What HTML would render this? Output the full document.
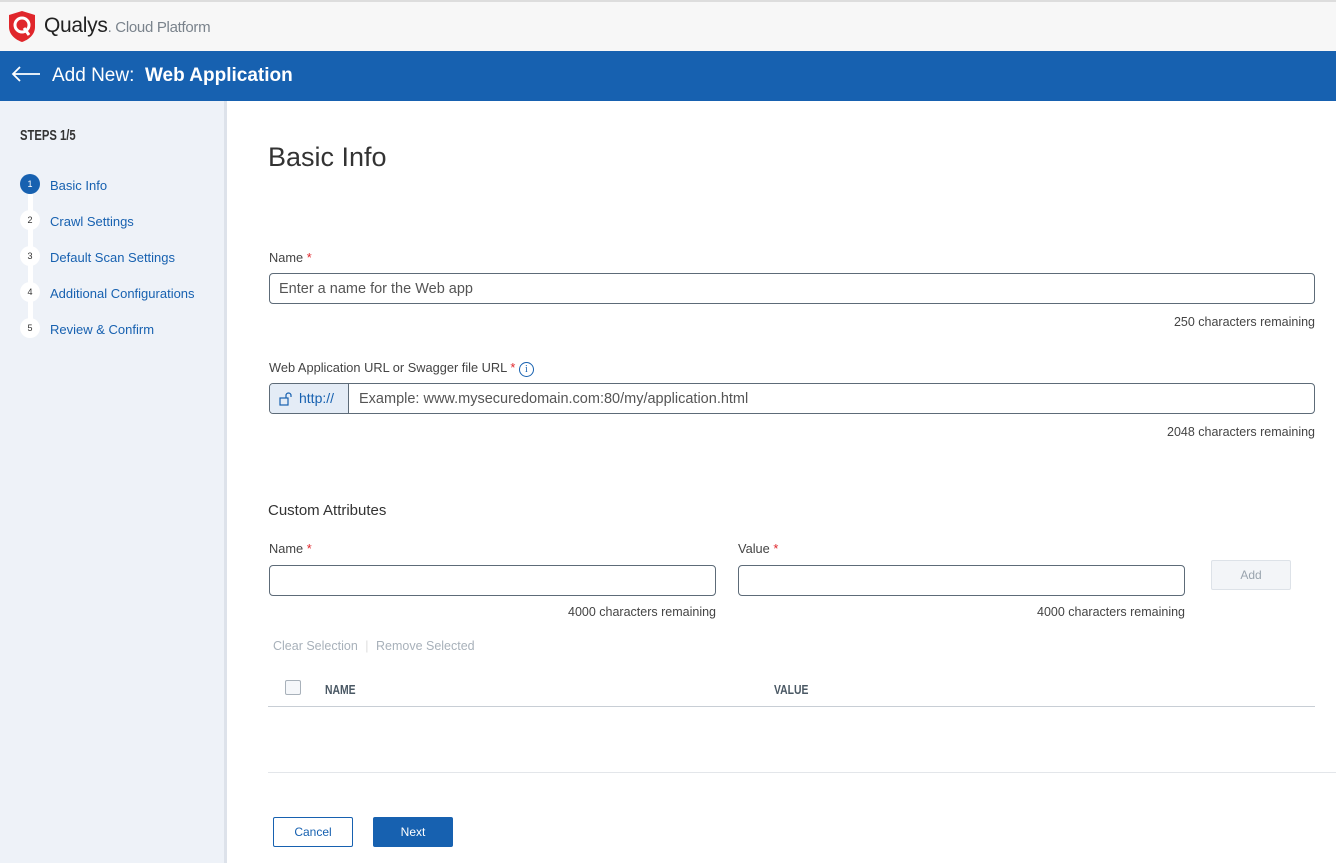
<!DOCTYPE html>
<html><head><meta charset="utf-8"><style>
*{box-sizing:border-box;margin:0;padding:0}
body{width:1336px;height:863px;overflow:hidden;font-family:"Liberation Sans",sans-serif;background:#fff;position:relative;color:#333}
.abs{position:absolute}
.top{left:0;top:0;width:1336px;height:51px;background:#f7f7f7;border-top:2px solid #ddd}
.bar{left:0;top:51px;width:1336px;height:50px;background:#1761b0;color:#fff}
.side{left:0;top:101px;width:227px;height:762px;background:#eef2f8;border-right:3px solid #dde2ea}
.lbl{font-size:12.8px;color:#444}
.req{color:#e0262b}
.inp{border:1px solid #5d6b78;border-radius:4px;height:31px;font-size:14.5px;color:#555;padding:7px 9px}
.rem{font-size:12.5px;color:#444;text-align:right}
.step{position:absolute;left:20px;font-size:13px;color:#1761b0}
.num{position:absolute;left:0;width:20px;height:20px;border-radius:50%;background:#fff;color:#333;font-size:9px;text-align:center;line-height:20px}
</style></head><body>
<div class="abs top">
<svg class="abs" style="left:8px;top:8px" width="28" height="33" viewBox="0 0 28 33"><path d="M14 1 L27 5 V17 C27 25 20 30 14 32 C8 30 1 25 1 17 V5 Z" fill="#e0262b"/><circle cx="14" cy="15" r="7" fill="none" stroke="#fff" stroke-width="3"/><path d="M16 18 L21 25" stroke="#fff" stroke-width="3"/></svg>
<div class="abs" style="left:44px;top:12px;font-size:21px;color:#222;letter-spacing:-0.3px">Qualys<span style="font-size:15px;color:#7a838c">. Cloud Platform</span></div>
</div>
<div class="abs bar">
<svg class="abs" style="left:11px;top:15px" width="30" height="16" viewBox="0 0 30 16"><path d="M29 8H2M9 1L2 8L9 15" fill="none" stroke="#fff" stroke-width="1.8"/></svg>
<div class="abs" style="left:52px;top:14px;font-size:19px">Add New:&nbsp; <b>Web Application</b></div>
</div>
<div class="abs side">
<div class="abs" style="left:20px;top:26px;font-size:15px;font-weight:bold;color:#333;transform:scaleX(.75);transform-origin:left">STEPS 1/5</div>
<div class="abs" style="left:28px;top:83px;width:5px;height:144px;background:#fff"></div>
<div class="abs" style="left:20px;top:73px;width:205px">
<div class="num" style="top:0;background:#1761b0;color:#fff">1</div><div class="step" style="top:4px;left:30px">Basic Info</div>
<div class="num" style="top:36px">2</div><div class="step" style="top:40px;left:30px">Crawl Settings</div>
<div class="num" style="top:72px">3</div><div class="step" style="top:76px;left:30px">Default Scan Settings</div>
<div class="num" style="top:108px">4</div><div class="step" style="top:112px;left:30px">Additional Configurations</div>
<div class="num" style="top:144px">5</div><div class="step" style="top:148px;left:30px">Review &amp; Confirm</div>
</div></div>
<div class="abs" style="left:268px;top:142px;font-size:27px;color:#333">Basic Info</div>
<div class="abs lbl" style="left:269px;top:250px">Name <span class="req">*</span></div>
<div class="abs inp" style="left:269px;top:273px;width:1046px">Enter a name for the Web app</div>
<div class="abs rem" style="left:1000px;top:315px;width:315px">250 characters remaining</div>
<div class="abs lbl" style="left:269px;top:360px">Web Application URL or Swagger file URL <span class="req">*</span> <span style="display:inline-block;width:15px;height:15px;border:1px solid #1761b0;border-radius:50%;color:#1761b0;font-size:10px;text-align:center;line-height:13px;font-family:'Liberation Serif'">i</span></div>
<div class="abs inp" style="left:269px;top:383px;width:1046px;padding:0;overflow:hidden">
<div style="position:absolute;left:0;top:0;width:79px;height:29px;background:#e4ecf6;border-right:1px solid #5d6b78;color:#1761b0;font-size:14px;padding:6px 0 0 29px">http://</div>
<svg style="position:absolute;left:9px;top:8px" width="15" height="14" viewBox="0 0 15 14"><rect x="1" y="6" width="8" height="7" fill="none" stroke="#1761b0" stroke-width="1.2"/><path d="M7 6V3.5a2.5 2.5 0 0 1 5 0V5" fill="none" stroke="#1761b0" stroke-width="1.2"/></svg>
<div style="position:absolute;left:89px;top:7px">Example: www.mysecuredomain.com:80/my/application.html</div></div>
<div class="abs rem" style="left:1000px;top:425px;width:315px">2048 characters remaining</div>
<div class="abs" style="left:268px;top:502px;font-size:15px;color:#333">Custom Attributes</div>
<div class="abs lbl" style="left:269px;top:541px">Name <span class="req">*</span></div>
<div class="abs lbl" style="left:738px;top:541px">Value <span class="req">*</span></div>
<div class="abs inp" style="left:269px;top:565px;width:447px"></div>
<div class="abs inp" style="left:738px;top:565px;width:447px"></div>
<div class="abs" style="left:1211px;top:560px;width:80px;height:30px;border:1px solid #dde2e8;background:#f3f5f8;color:#9aa4ae;font-size:12px;text-align:center;line-height:28px;border-radius:2px">Add</div>
<div class="abs rem" style="left:400px;top:605px;width:316px">4000 characters remaining</div>
<div class="abs rem" style="left:870px;top:605px;width:315px">4000 characters remaining</div>
<div class="abs" style="left:273px;top:639px;font-size:12.5px;color:#a8b1ba">Clear Selection <span style="color:#ddd;margin:0 4px">|</span> Remove Selected</div>
<div class="abs" style="left:285px;top:680px;width:16px;height:15px;border:1px solid #a8b1ba;border-radius:2px;background:#f5f7fa"></div>
<div class="abs" style="left:325px;top:682px;font-size:13px;font-weight:bold;color:#4a5864;transform:scaleX(.8);transform-origin:left">NAME</div>
<div class="abs" style="left:774px;top:682px;font-size:13px;font-weight:bold;color:#4a5864;transform:scaleX(.8);transform-origin:left">VALUE</div>
<div class="abs" style="left:268px;top:706px;width:1047px;height:1px;background:#c8ced5"></div>
<div class="abs" style="left:268px;top:772px;width:1068px;height:1px;background:#e3e6ea"></div>
<div class="abs" style="left:273px;top:817px;width:80px;height:30px;border:1px solid #1761b0;border-radius:2px;color:#1761b0;font-size:12px;text-align:center;line-height:28px">Cancel</div>
<div class="abs" style="left:373px;top:817px;width:80px;height:30px;background:#1761b0;border-radius:2px;color:#fff;font-size:12px;text-align:center;line-height:30px">Next</div>
</body></html>
